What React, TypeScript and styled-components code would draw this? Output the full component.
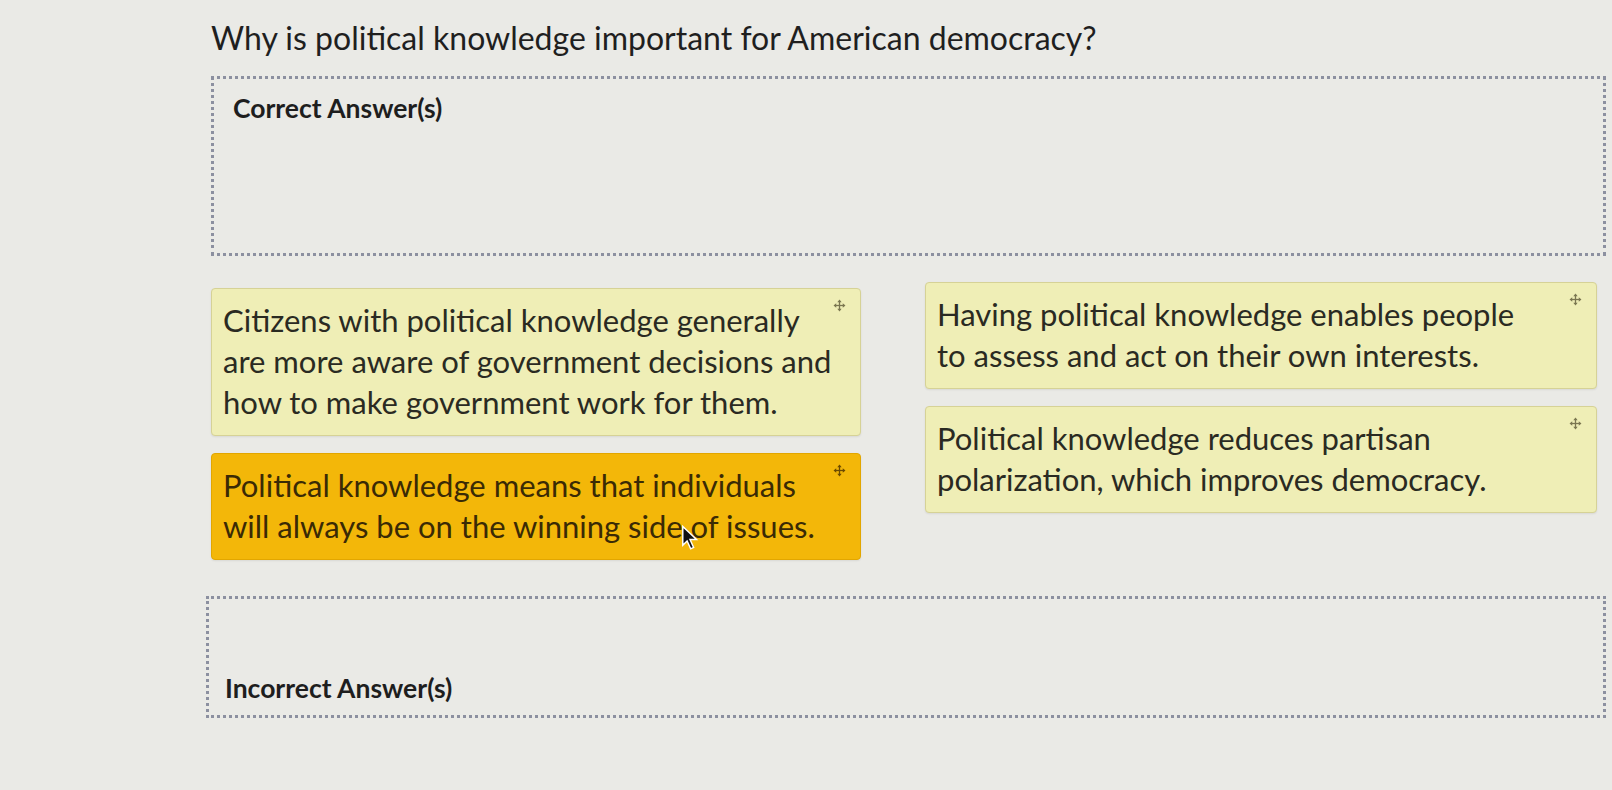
import React from "react";
import styled, { createGlobalStyle } from "styled-components";

const Global = createGlobalStyle`
  html, body { margin: 0; padding: 0; }
  body {
    background: #eaeae6;
    font-family: Lato, "Open Sans", sans-serif;
    color: #262620;
    width: 1612px;
    height: 790px;
    overflow: hidden;
  }
`;

const Page = styled.div`
  padding: 18px 6px 0 211px;
  display: flex;
  flex-direction: column;
`;

const Title = styled.h1`
  margin: 0 0 18px 0;
  font-size: 32px;
  font-weight: 400;
  line-height: 40px;
  color: #1f1f1f;
`;

const DropZone = styled.div<{ $height: number; $bottomLabel?: boolean }>`
  height: ${(p) => p.$height}px;
  border: 3px dotted #8c90a0;
  box-sizing: border-box;
  display: flex;
  flex-direction: column;
  justify-content: ${(p) => (p.$bottomLabel ? "flex-end" : "flex-start")};
  padding: ${(p) => (p.$bottomLabel ? "0 0 10px 16px" : "12px 0 0 19px")};
  margin-left: ${(p) => (p.$bottomLabel ? "-5px" : "0")};
`;

const ZoneLabel = styled.div`
  font-size: 26.5px;
  font-weight: 700;
  color: #1e1e1e;
  line-height: 34px;
`;

const CardsGrid = styled.div`
  display: grid;
  grid-template-columns: 650px 672px;
  column-gap: 64px;
  margin: 26px 0 36px 0;
  align-items: start;
`;

const Column = styled.div<{ $offset: number }>`
  display: flex;
  flex-direction: column;
  gap: 17px;
  margin-top: ${(p) => p.$offset}px;
`;

const Card = styled.div<{ $active?: boolean }>`
  position: relative;
  background: ${(p) => (p.$active ? "#f3b709" : "#efeeb6")};
  border: 1.5px solid ${(p) => (p.$active ? "#e2a600" : "#d6d296")};
  border-radius: 4px;
  padding: 11px 20px 12px 11px;
  font-size: 31px;
  line-height: 41px;
  white-space: pre;
  color: ${(p) => (p.$active ? "#3a2a05" : "#2a2a22")};
  box-shadow: 0 1px 2px rgba(0, 0, 0, 0.08);
`;

const Handle = styled.svg`
  position: absolute;
  top: 10px;
  right: 14px;
  width: 13px;
  height: 13px;
`;

const Cursor = styled.svg`
  position: absolute;
  width: 18px;
  height: 26px;
`;

const MoveIcon = ({ color }: { color: string }) => (
  <Handle viewBox="0 0 12 12">
    <g fill={color}>
      <path d="M6 0.5 L8 3 H4 Z" />
      <path d="M6 11.5 L8 9 H4 Z" />
      <path d="M0.5 6 L3 4 V8 Z" />
      <path d="M11.5 6 L9 4 V8 Z" />
      <rect x="5.4" y="2.5" width="1.2" height="7" />
      <rect x="2.5" y="5.4" width="7" height="1.2" />
    </g>
  </Handle>
);

const cardsLeft = [
  {
    text: "Citizens with political knowledge generally\nare more aware of government decisions and\nhow to make government work for them.",
    active: false,
  },
  {
    text: "Political knowledge means that individuals\nwill always be on the winning side of issues.",
    active: true,
  },
];

const cardsRight = [
  {
    text: "Having political knowledge enables people\nto assess and act on their own interests.",
    active: false,
  },
  {
    text: "Political knowledge reduces partisan\npolarization, which improves democracy.",
    active: false,
  },
];

export default function App() {
  return (
    <>
      <Global />
      <Page>
        <Title>Why is political knowledge important for American democracy?</Title>
        <DropZone $height={180}>
          <ZoneLabel>Correct Answer(s)</ZoneLabel>
        </DropZone>
        <CardsGrid>
          <Column $offset={6}>
            {cardsLeft.map((c, i) => (
              <Card key={i} $active={c.active}>
                {c.text}
                <MoveIcon color={c.active ? "#6b4a00" : "#7a7650"} />
                {c.active && (
                  <Cursor viewBox="0 0 12 18" style={{ left: 469, top: 71 }}>
                    <path d="M1 1 L1 14 L4 11 L6.5 16.5 L8.5 15.5 L6 10 L10.5 10 Z" fill="#111" stroke="#fff" strokeWidth="1" />
                  </Cursor>
                )}
              </Card>
            ))}
          </Column>
          <Column $offset={0}>
            {cardsRight.map((c, i) => (
              <Card key={i} $active={c.active}>
                {c.text}
                <MoveIcon color="#7a7650" />
              </Card>
            ))}
          </Column>
        </CardsGrid>
        <DropZone $height={122} $bottomLabel>
          <ZoneLabel>Incorrect Answer(s)</ZoneLabel>
        </DropZone>
      </Page>
    </>
  );
}
